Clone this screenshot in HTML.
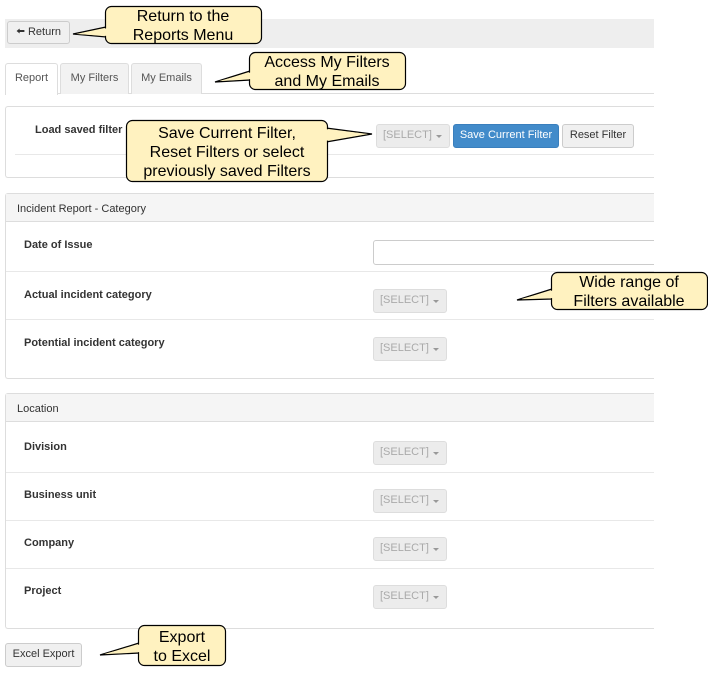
<!DOCTYPE html>
<html><head><style>
*{box-sizing:border-box}
body{margin:0;width:708px;height:680px;background:#fff;font-family:"Liberation Sans",Arial,sans-serif;font-size:11px;color:#333;position:relative;overflow:hidden}
.a{position:absolute}
.btn{position:absolute;border:1px solid #ccc;border-radius:3px;background:#f0f0f0;font-size:11px;color:#333;text-align:center;line-height:21px}
.sel{position:absolute;border:1px solid #ddd;border-radius:3px;background:#ececec;color:#aaa;font-size:11px;line-height:21px;padding-left:6px;width:74px;height:24px}
.sel:after{content:"";position:absolute;right:7px;top:10px;border-left:3px solid transparent;border-right:3px solid transparent;border-top:3px solid #999}
.lbl{position:absolute;font-weight:bold;font-size:11px;color:#333}
.hr{position:absolute;height:1px;background:#e8e8e8}
.panel{position:absolute;left:5px;width:660px;border:1px solid #ddd;border-radius:3px;border-right:none}
.ph{position:absolute;left:0;right:0;top:0;height:28px;background:#f5f5f5;border-bottom:1px solid #ddd;padding:9px 11px;font-size:11px}
.tab{position:absolute;top:63px;height:31px;border:1px solid #ddd;border-bottom:none;border-radius:3px 3px 0 0;background:#f2f2f2;font-size:11px;color:#555;text-align:center;line-height:28px}
</style></head><body>
<div class="a" style="left:5px;top:19px;width:649px;height:29px;background:#eee"></div>
<div class="btn" style="left:7px;top:21px;width:63px;height:23px">&#129064; Return</div>

<div class="a" style="left:5px;top:93px;width:649px;height:1px;background:#ddd"></div>
<div class="tab" style="left:5px;width:53px;background:#fff;height:32px">Report</div>
<div class="tab" style="left:60px;width:69px">My Filters</div>
<div class="tab" style="left:131px;width:71px">My Emails</div>

<div class="panel" style="top:106px;height:72px"></div>
<div class="lbl" style="left:35px;top:124px">Load saved filter</div>
<div class="hr" style="left:15px;top:154px;width:639px"></div>
<div class="sel" style="left:376px;top:124px">[SELECT]</div>
<div class="btn" style="left:453px;top:124px;width:106px;height:24px;background:#428bca;border-color:#3a7fbd;color:#fff">Save Current Filter</div>
<div class="btn" style="left:562px;top:124px;width:72px;height:24px">Reset Filter</div>

<div class="panel" style="top:193px;height:186px"><div class="ph">Incident Report - Category</div></div>
<div class="lbl" style="left:24px;top:239px">Date of Issue</div>
<div class="a" style="left:373px;top:240px;width:290px;height:25px;border:1px solid #ccc;border-radius:3px"></div>
<div class="hr" style="left:6px;top:271px;width:648px"></div>
<div class="lbl" style="left:24px;top:289px">Actual incident category</div>
<div class="sel" style="left:373px;top:289px">[SELECT]</div>
<div class="hr" style="left:6px;top:319px;width:648px"></div>
<div class="lbl" style="left:24px;top:337px">Potential incident category</div>
<div class="sel" style="left:373px;top:337px">[SELECT]</div>

<div class="panel" style="top:393px;height:236px"><div class="ph">Location</div></div>
<div class="lbl" style="left:24px;top:441px">Division</div>
<div class="sel" style="left:373px;top:441px">[SELECT]</div>
<div class="hr" style="left:6px;top:472px;width:648px"></div>
<div class="lbl" style="left:24px;top:489px">Business unit</div>
<div class="sel" style="left:373px;top:489px">[SELECT]</div>
<div class="hr" style="left:6px;top:520px;width:648px"></div>
<div class="lbl" style="left:24px;top:537px">Company</div>
<div class="sel" style="left:373px;top:537px">[SELECT]</div>
<div class="hr" style="left:6px;top:568px;width:648px"></div>
<div class="lbl" style="left:24px;top:585px">Project</div>
<div class="sel" style="left:373px;top:585px">[SELECT]</div>

<div class="a" style="left:654px;top:0;width:54px;height:680px;background:#fff"></div>
<div class="btn" style="left:5px;top:643px;width:77px;height:24px">Excel Export</div>

<svg class="a" style="left:0;top:0" width="708" height="680" font-family="Liberation Sans,Arial,sans-serif" font-size="16" text-anchor="middle">
<g fill="#fff2c0" stroke="#000" stroke-width="1.2">
<polygon points="106,27 73,34 106,37"/><rect x="105.5" y="6.5" width="156" height="37" rx="6"/>
<polygon points="250,71 215,82 250,80"/><rect x="249.5" y="52.5" width="156" height="37" rx="6"/>
<polygon points="326,128 372,134 326,142"/><rect x="126.5" y="120.5" width="201" height="61" rx="6"/>
<polygon points="552,289 517,300 552,299"/><rect x="551.5" y="272.5" width="156" height="37" rx="6"/>
<polygon points="139,643 100,655 139,653"/><rect x="138.5" y="625.5" width="87" height="40" rx="6"/>
</g>
<g fill="#fff2c0" stroke="none">
<polygon points="108,28 76,34 108,36"/>
<polygon points="252,72 219,81 252,79"/>
<polygon points="325,129 368,134 325,141"/>
<polygon points="554,290 521,299 554,298"/>
<polygon points="141,644 104,654 141,652"/>
</g>
<g fill="#000">
<text x="183" y="21">Return to the</text><text x="183" y="40">Reports Menu</text>
<text x="327" y="67">Access My Filters</text><text x="327" y="86">and My Emails</text>
<text x="227" y="138">Save Current Filter,</text><text x="227" y="157">Reset Filters or select</text><text x="227" y="176">previously saved Filters</text>
<text x="629" y="287">Wide range of</text><text x="629" y="306">Filters available</text>
<text x="182" y="642">Export</text><text x="182" y="661">to Excel</text>
</g>
</svg>
</body></html>
